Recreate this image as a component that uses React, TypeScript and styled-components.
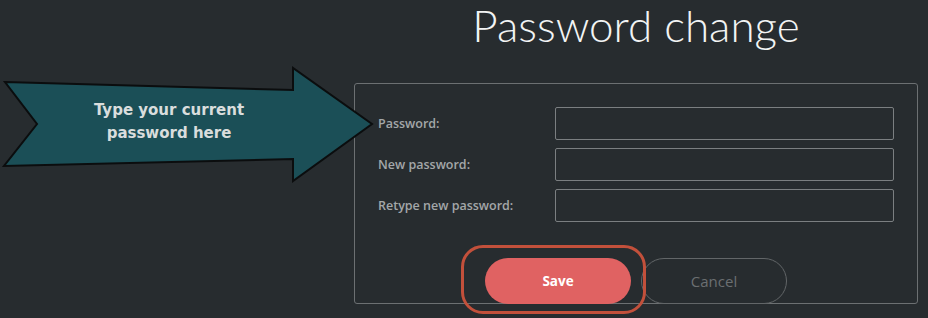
import React from 'react'
import styled, { createGlobalStyle } from 'styled-components'

const GlobalStyle = createGlobalStyle`
  html, body {
    margin: 0;
    padding: 0;
    background: #272c2f;
  }
  body {
    font-family: "Open Sans", "Liberation Sans", sans-serif;
  }
`

const Page = styled.div`
  position: relative;
  width: 928px;
  height: 318px;
  overflow: hidden;
  display: flex;
  background: #272c2f;
`

const Spacer = styled.div`
  width: 354px;
  flex-shrink: 0;
`

const Panel = styled.div`
  width: 564px;
  display: flex;
  flex-direction: column;
`

const Title = styled.h1`
  margin: 0;
  height: 83px;
  padding-top: 1px;
  box-sizing: border-box;
  font-family: Lato, "Liberation Sans", sans-serif;
  font-weight: 300;
  font-size: 44px;
  line-height: 48px;
  color: #f2f4f4;
  text-align: center;
`

const Box = styled.div`
  border: 1px solid #6c7072;
  border-radius: 3px;
  padding: 23px 23px 0 23px;
  height: 221px;
  box-sizing: border-box;
  display: flex;
  flex-direction: column;
`

const Fields = styled.div`
  display: grid;
  grid-template-columns: 177px 1fr;
  grid-auto-rows: 33px;
  row-gap: 8px;
  align-items: center;
`

const Label = styled.label`
  font-size: 12.5px;
  font-weight: 600;
  color: #a3a7a9;
`

const Input = styled.input`
  height: 33px;
  box-sizing: border-box;
  border: 1px solid #7b7f81;
  border-radius: 2px;
  background: transparent;
  outline: none;
`

const Buttons = styled.div`
  margin-top: auto;
  margin-bottom: -1px;
  display: flex;
  justify-content: center;
  gap: 10px;
`

const Button = styled.button<{ primary?: boolean }>`
  width: 146px;
  height: 46px;
  border-radius: 23px;
  font-family: "Open Sans", "Liberation Sans", sans-serif;
  font-size: ${p => (p.primary ? '13.5px' : '15px')};
  font-weight: ${p => (p.primary ? 700 : 400)};
  color: ${p => (p.primary ? '#ffffff' : '#6b6f71')};
  background: ${p => (p.primary ? '#e06262' : '#272c2f')};
  border: ${p => (p.primary ? 'none' : '1px solid #626668')};
  cursor: pointer;
`

const Highlight = styled.div`
  position: absolute;
  left: 461px;
  top: 245px;
  width: 185px;
  height: 69px;
  box-sizing: border-box;
  border: 3px solid #c2503b;
  border-radius: 22px;
  pointer-events: none;
`

const Callout = styled.div`
  position: absolute;
  left: 0;
  top: 64px;
  width: 378px;
  height: 120px;
`

const CalloutText = styled.div`
  position: absolute;
  left: 56px;
  top: 35px;
  width: 226px;
  text-align: center;
  font-family: "DejaVu Sans", Verdana, sans-serif;
  font-weight: 700;
  font-size: 15px;
  line-height: 23px;
  color: #d9dddd;
`

const Arrow = () => (
  <svg width="378" height="120" viewBox="0 64 378 120" style={{ position: 'absolute', left: 0, top: 0 }}>
    <polygon
      points="5,82 293,90 293,68 372,124 293,181 293,159 4,166 37,124"
      fill="#1b4f57"
      stroke="#0b0d0e"
      strokeWidth="2"
      strokeLinejoin="miter"
    />
  </svg>
)

const App: React.FC = () => {
  return (
    <>
      <GlobalStyle />
      <Page>
        <Spacer />
        <Panel>
          <Title>Password change</Title>
          <Box>
            <Fields>
              <Label>Password:</Label>
              <Input type="password" />
              <Label>New password:</Label>
              <Input type="password" />
              <Label>Retype new password:</Label>
              <Input type="password" />
            </Fields>
            <Buttons>
              <Button primary>Save</Button>
              <Button>Cancel</Button>
            </Buttons>
          </Box>
        </Panel>
        <Callout>
          <Arrow />
          <CalloutText>
            Type your current
            <br />
            password here
          </CalloutText>
        </Callout>
        <Highlight />
      </Page>
    </>
  )
}

export default App
